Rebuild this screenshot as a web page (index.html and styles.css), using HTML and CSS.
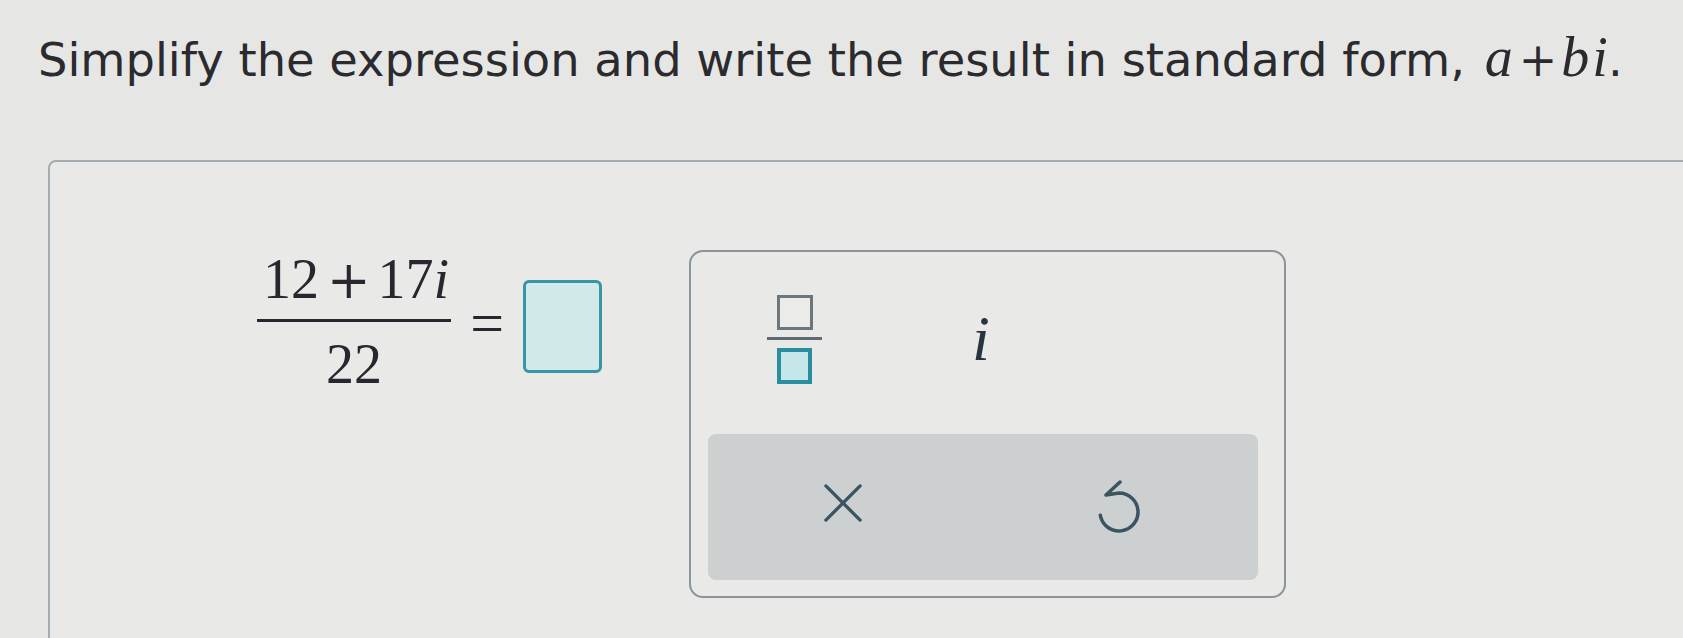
FILE: index.html
```html
<!DOCTYPE html>
<html lang="en">
<head>
<meta charset="utf-8">
<title>Simplify the expression</title>
<link rel="stylesheet" href="styles.css">
</head>
<body>
<div class="page">
  <h1 class="prompt">Simplify the expression and write the result in standard form, <span class="tmath"><i class="var">a</i><span class="op">+</span><i class="var">b</i><i class="var vi">i</i></span>.</h1>
  <div class="card">
    <div class="work">
      <div class="equation">
        <div class="frac">
          <div class="num">12<span class="op">+</span><span class="after-op">17</span><i class="var">i</i></div>
          <div class="bar"></div>
          <div class="den">22</div>
        </div>
        <span class="eq">=</span>
        <span class="answer-box"></span>
      </div>
      <div class="palette">
        <div class="tools">
          <button class="tool" aria-label="fraction">
            <span class="frac-icon">
              <span class="sq-top"></span>
              <span class="sq-bar"></span>
              <span class="sq-bottom"></span>
            </span>
          </button>
          <button class="tool" aria-label="i"><i class="tool-i">i</i></button>
          <span class="tool-empty"></span>
        </div>
        <div class="keys">
          <button class="key" aria-label="clear">
            <svg class="icon-x" viewBox="0 0 40 40" width="40" height="40">
              <path d="M2 2 L38 38 M38 2 L2 38" />
            </svg>
          </button>
          <button class="key" aria-label="undo">
            <svg class="icon-undo" viewBox="0 0 50 62" width="50" height="62">
              <path d="M26 5 L12 18 L25 16 A19 19 0 1 1 6.3 38.3" />
            </svg>
          </button>
        </div>
      </div>
    </div>
  </div>
</div>
</body>
</html>
```

FILE: styles.css
```css
html, body {
  margin: 0;
  padding: 0;
  height: 100%;
  overflow: hidden;
  background: #e6e7e5;
}

.page {
  width: 1683px;
  height: 638px;
  overflow: hidden;
  font-family: "DejaVu Sans", Verdana, sans-serif;
}

.prompt {
  margin: 0;
  padding: 33px 0 0 38px;
  height: 56px;
  font-size: 46.4px;
  font-weight: normal;
  line-height: 54px;
  color: #2b2b2f;
  white-space: nowrap;
}

.tmath {
  font-family: "Liberation Serif", "Times New Roman", serif;
  font-size: 56px;
  line-height: 30px;
  margin-left: 5px;
}

.var {
  font-style: italic;
}

.tmath .op {
  font-family: "DejaVu Serif", serif;
  font-style: normal;
  font-size: 46px;
  margin: 0 4px 0 6px;
}

.tmath .vi {
  margin-left: 3px;
}

.card {
  margin: 71px -60px 0 48px;
  height: 520px;
  border: 2px solid #a3adb1;
  border-radius: 8px 0 0 0;
  background: #e9eae8;
}

.work {
  display: flex;
  align-items: flex-start;
  padding: 88px 0 0 207px;
}

.equation {
  display: flex;
  align-items: flex-start;
  margin-top: 1px;
  font-family: "Liberation Serif", "Times New Roman", serif;
  color: #2b2530;
}

.frac {
  display: flex;
  flex-direction: column;
  align-items: stretch;
  font-size: 56px;
  line-height: 56px;
}

.num {
  display: flex;
  align-items: baseline;
  padding: 0 2px 11px 6px;
  white-space: nowrap;
}

.num .op {
  font-family: "DejaVu Serif", serif;
  font-size: 52px;
  margin-left: 8px;
}

.num .after-op {
  margin-left: 7px;
}

.bar {
  height: 3px;
  background: #2b2530;
}

.den {
  padding-top: 14px;
  text-align: center;
}

.eq {
  margin: 42px 0 0 19px;
  font-size: 60px;
  line-height: 60px;
}

.answer-box {
  box-sizing: border-box;
  width: 79px;
  height: 93px;
  margin: 29px 0 0 19px;
  border: 3px solid #3795a5;
  border-radius: 6px;
  background: #d2e9ea;
}

.palette {
  box-sizing: border-box;
  width: 597px;
  height: 348px;
  margin-left: 87px;
  padding: 0 26px 16px 17px;
  border: 2px solid #8a949a;
  border-radius: 14px;
  display: flex;
  flex-direction: column;
}

.tools {
  box-sizing: border-box;
  height: 182px;
  padding: 0 0 8px 0;
  margin-left: -6px;
  display: grid;
  grid-template-columns: 186px 186px 1fr;
  align-items: center;
}

.tool {
  border: none;
  background: transparent;
  padding: 0;
  margin: 0;
  display: flex;
  align-items: center;
  justify-content: center;
  cursor: pointer;
}

.frac-icon {
  display: flex;
  flex-direction: column;
  align-items: center;
}

.sq-top {
  box-sizing: border-box;
  width: 36px;
  height: 35px;
  border: 3px solid #6c767d;
  background: #ebecea;
}

.sq-bar {
  width: 55px;
  height: 3px;
  margin: 7px 0 8px;
  background: #5f6a72;
}

.sq-bottom {
  box-sizing: border-box;
  width: 35px;
  height: 36px;
  border: 4px solid #2a8ea0;
  background: #c6e7e9;
}

.tool-i {
  font-family: "Liberation Serif", "Times New Roman", serif;
  font-style: italic;
  font-size: 64px;
  line-height: 64px;
  color: #283541;
}

.keys {
  flex: 1;
  display: grid;
  grid-template-columns: 1fr 1fr;
  background: #cdd0d1;
  border-radius: 8px;
}

.key {
  border: none;
  background: transparent;
  padding: 0;
  margin: 0;
  display: flex;
  align-items: center;
  justify-content: center;
  cursor: pointer;
}

.icon-x path,
.icon-undo path {
  fill: none;
  stroke: #3b5560;
  stroke-width: 3.5;
  stroke-linecap: round;
  stroke-linejoin: round;
}

.icon-x {
  width: 38px;
  height: 38px;
  margin: 0 4px 8px 0;
}

.icon-undo {
  width: 50px;
  height: 62px;
  margin: 2px 0 0 -3px;
}
```
